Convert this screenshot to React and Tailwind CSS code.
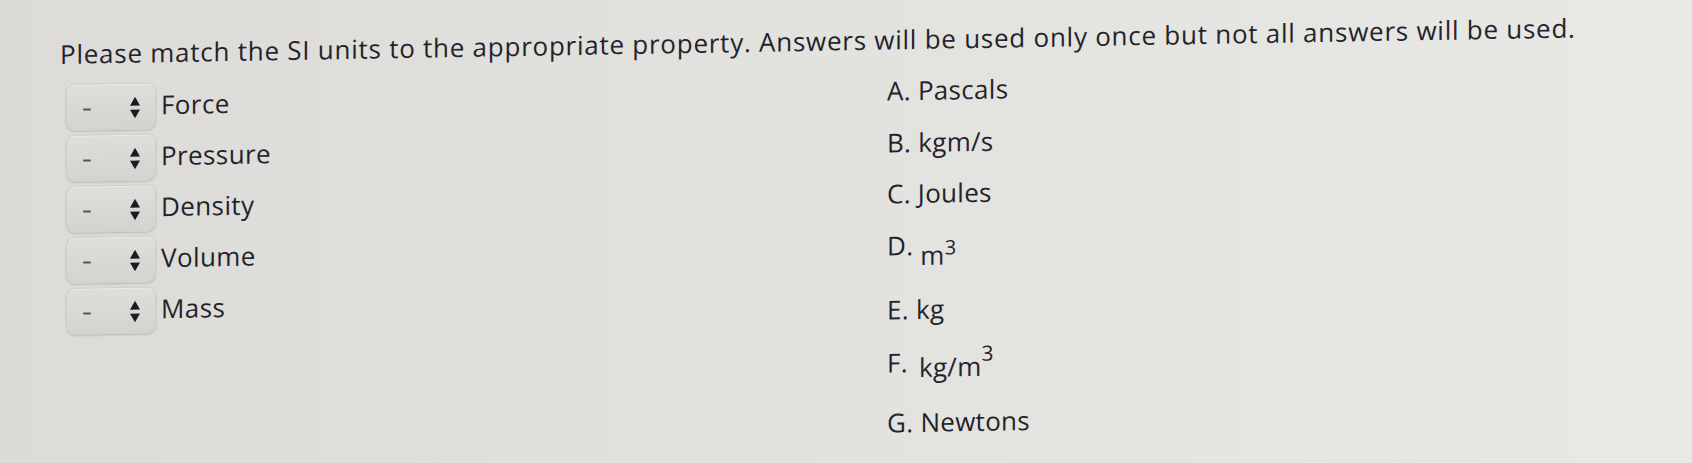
import React from "react";

const properties = ["Force", "Pressure", "Density", "Volume", "Mass"];

function UpDownArrows() {
  return (
    <svg width="10" height="22" viewBox="0 0 10 22" className="shrink-0 mt-[3px]">
      <polygon points="5,0 10,9 0,9" fill="#1c1b22" />
      <polygon points="0,13 10,13 5,21.5" fill="#1c1b22" />
    </svg>
  );
}

function MatchSelect() {
  return (
    <div className="w-[90px] h-[47px] shrink-0 rounded-[9px] border border-[#cfcfcc] bg-linear-to-b from-[#dededb] to-[#d3d3d0] shadow-[inset_0_1px_0_#ebebe8,0_1px_2px_rgba(0,0,0,0.18)] flex items-center justify-between pl-[16px] pr-[15px]">
      <span className="block w-[8px] h-[2px] mt-[4px] rounded-full bg-[#55545b]" />
      <UpDownArrows />
    </div>
  );
}

export default function App() {
  return (
    <div className="w-full h-[463px] overflow-hidden bg-linear-to-r from-[#dcdbd8] via-[#e2e2df] to-[#e8e8e5] text-[#24232b] font-['Open_Sans',sans-serif]">
      <div className="-skew-y-1 origin-left pl-[60px] pt-[38px]">
        <p className="text-[26px] leading-[35px] tracking-[0.75px] whitespace-nowrap">
          Please match the SI units to the appropriate property. Answers will be used only once but not all answers will be used.
        </p>

        <div className="flex items-start mt-[7px]">
          {/* property rows with their answer pickers */}
          <div className="w-[827px] shrink-0 pl-[6px] pt-[5px] flex flex-col gap-[4px]">
            {properties.map((name) => (
              <div key={name} className="flex items-center gap-[5px]">
                <MatchSelect />
                <span className="text-[26px] leading-[34px] tracking-[0.4px] -mt-[4px]">{name}</span>
              </div>
            ))}
          </div>

          {/* answer list */}
          <div className="flex flex-col text-[26px] leading-[52px] tracking-[0.3px] whitespace-nowrap">
            <div className="h-[52px]">A. Pascals</div>
            <div className="h-[51px]">B. kgm/s</div>
            <div className="h-[52px]">C. Joules</div>
            <div className="h-[64px]">
              D.{" "}
              <span className="align-[-10px] leading-none">m</span>
              <span className="text-[20px] leading-none">3</span>
            </div>
            <div className="h-[53px]">E. kg</div>
            <div className="h-[60px]">
              F.{" "}
              <span className="align-[-5px] leading-none ml-[4px]">
                kg/m<span className="text-[21px] align-[15px] leading-none">3</span>
              </span>
            </div>
            <div className="h-[52px]">G. Newtons</div>
          </div>
        </div>
      </div>
    </div>
  );
}
